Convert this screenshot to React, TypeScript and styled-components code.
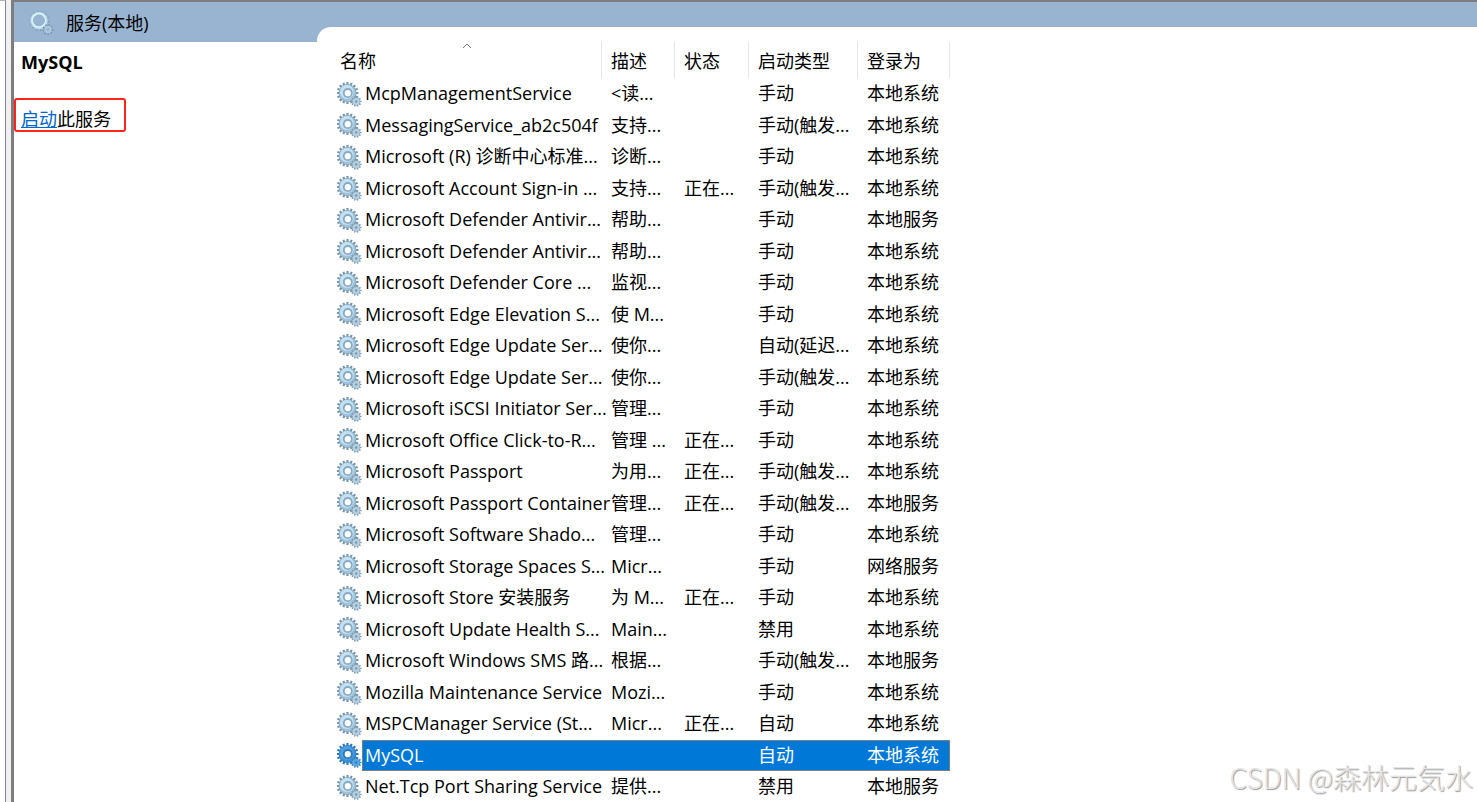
import React from "react";
import styled, { createGlobalStyle } from "styled-components";

const GlobalStyle = createGlobalStyle`
  * { box-sizing: border-box; }
  body {
    margin: 0;
    overflow: hidden;
    background: #fff;
    color: #000;
    font-family: "Open Sans", "Noto Sans CJK SC", sans-serif;
    font-size: 18px;
    line-height: 24px;
  }
`;

const Window = styled.div`
  display: flex;
  position: relative;
  height: 100vh;
  overflow: hidden;
`;

const TreeEdge = styled.div`
  flex: none;
  width: 6px;
  border-top: 1px solid #b4b4b4;
  border-right: 1px solid #828790;
`;

const Splitter = styled.div`
  flex: none;
  width: 5px;
  background: #f0f0f0;
`;

const Frame = styled.main`
  flex: 1;
  display: flex;
  min-width: 0;
  border-left: 3px solid #7d7d7d;
  border-top: 2px solid #7d7d7d;
`;

const DetailPane = styled.section`
  flex: none;
  width: 303px;
`;

const PaneTitle = styled.header`
  display: flex;
  align-items: center;
  gap: 12px;
  height: 40px;
  padding: 2px 0 0 15px;
  background: #99b4d1;
`;

const DetailBody = styled.div`
  display: flex;
  flex-direction: column;
  align-items: flex-start;
  gap: 24px;
  padding-top: 8px;
`;

const ServiceName = styled.h1`
  margin: 0;
  padding-left: 7px;
  font-size: 18px;
  line-height: 24px;
  font-weight: 700;
`;

const ActionBox = styled.p`
  margin: 0;
  padding: 8px 13px 0 5px;
  border: 2px solid #fe2419;
  border-radius: 3px;
  line-height: 22px;
`;

const ActionLink = styled.a`
  color: #0066cc;
  text-decoration: underline;
`;

const ListPane = styled.section`
  flex: 1;
  display: flex;
  min-width: 0;
  padding-top: 25px;
  background: #99b4d1;
`;

const ListSheet = styled.div`
  flex: 1;
  min-width: 0;
  padding: 15px 0 0 13px;
  border-top-left-radius: 14px;
  background: #fff;
`;

const Table = styled.table`
  width: 620px;
  table-layout: fixed;
  border-collapse: separate;
  border-spacing: 0;
  white-space: nowrap;
`;

const HeadCell = styled.th`
  position: relative;
  height: 36px;
  padding: 2px 0 0 9px;
  border-right: 1px solid #e5e5e5;
  font-weight: 400;
  text-align: left;
  &:first-child { padding-left: 10px; }
`;

const SortMark = styled.svg`
  position: absolute;
  top: 0;
  left: calc(50% - 4px);
`;

const Row = styled.tr<{ $selected: boolean }>`
  height: 32px;
  color: ${(p) => (p.$selected ? "#fff" : "#000")};
  &:nth-child(even) { height: 31px; }
  td:not(:first-child) {
    background: ${(p) => (p.$selected ? "#0078d7" : "transparent")};
    border: 0 solid ${(p) => (p.$selected ? "#7d7d7d" : "transparent")};
    border-width: ${(p) => (p.$selected ? "1px 0" : "0")};
  }
  td:nth-child(2) { border-left-width: 1px; }
  td:last-child { border-right-width: 1px; }
`;

const IconCell = styled.td`
  padding: 0 0 0 7px;
  line-height: 0;
`;

const NameCell = styled.td`
  padding: 0 0 2px 2px;
`;

const Cell = styled.td`
  padding: 0 0 2px 9px;
`;

const Watermark = styled.div`
  position: absolute;
  right: 4px;
  bottom: 5px;
  color: #e4e4e4;
  font-family: "Noto Sans CJK SC", sans-serif;
  font-size: 28px;
  font-weight: 300;
  line-height: 40px;
  text-shadow: 1px 1px 1px #999;
`;

const gear = (cx: number, cy: number, outer: number, inner: number, teeth: number) => {
  const step = (Math.PI * 2) / teeth;
  const pt = (r: number, a: number) =>
    `${(cx + r * Math.cos(a)).toFixed(2)} ${(cy + r * Math.sin(a)).toFixed(2)}`;
  let d = "";
  for (let i = 0; i < teeth; i++) {
    const a = i * step;
    d += `${i ? "L" : "M"}${pt(inner, a - step * 0.3)}L${pt(outer, a - step * 0.25)}L${pt(outer, a + step * 0.25)}L${pt(inner, a + step * 0.3)}`;
  }
  return d + "Z";
};

const BIG_GEAR = gear(10.5, 11, 11, 8.8, 16);
const SMALL_GEAR = gear(19.2, 19.5, 5.4, 3.8, 10);

const GearIcon = ({ selected }: { selected: boolean }) => (
  <svg width="25" height="25" viewBox="0 0 25 25" aria-hidden="true">
    <path d={BIG_GEAR} fill={selected ? "#2877ba" : "#7796ad"} />
    <circle cx="10.5" cy="11" r="8.4" fill={selected ? "#3d8ed2" : "#9fc3db"} />
    <circle cx="9.8" cy="10" r="6.9" fill={selected ? "#4c9ee0" : "#c4e1f1"} />
    <circle cx="10.8" cy="11" r="4.9" fill={selected ? "#2b78bd" : "#86a9c4"} />
    <circle cx="10.8" cy="11.2" r="3.1" fill="#fff" />
    <path d={SMALL_GEAR} fill={selected ? "#2f83c8" : "#7d9bb0"} />
    <circle cx="19.2" cy="19.5" r="3.5" fill={selected ? "#58a6e0" : "#b4d0e1"} />
    <circle cx="19.2" cy="19.5" r="1.3" fill={selected ? "#2f83c8" : "#7f9cb2"} />
  </svg>
);

const TitleIcon = () => (
  <svg width="25" height="25" viewBox="0 0 25 25" aria-hidden="true">
    <circle cx="10.5" cy="10" r="9.5" fill="none" stroke="#809fba" strokeWidth="1.4" strokeDasharray="2 2.2" />
    <circle cx="10" cy="9.5" r="7.2" fill="none" stroke="#b9dbeb" strokeWidth="3" />
    <circle cx="9.8" cy="9.2" r="6.8" fill="none" stroke="#def1f8" strokeWidth="1.4" />
    <circle cx="10" cy="9.5" r="5.2" fill="none" stroke="#8fb6d2" strokeWidth="1" />
    <circle cx="19" cy="18.5" r="4.8" fill="none" stroke="#7795b0" strokeWidth="1.4" strokeDasharray="1.6 1.6" />
    <circle cx="19" cy="18.5" r="2.6" fill="none" stroke="#adc9dc" strokeWidth="1.6" />
  </svg>
);

const SYS = "本地系统";
const LOCAL = "本地服务";
const RUN = "正在...";
const TRIG = "手动(触发...";

const services: string[][] = [
  ["McpManagementService", "<读...", "", "手动", SYS],
  ["MessagingService_ab2c504f", "支持...", "", TRIG, SYS],
  ["Microsoft (R) 诊断中心标准...", "诊断...", "", "手动", SYS],
  ["Microsoft Account Sign-in ...", "支持...", RUN, TRIG, SYS],
  ["Microsoft Defender Antivir...", "帮助...", "", "手动", LOCAL],
  ["Microsoft Defender Antivir...", "帮助...", "", "手动", SYS],
  ["Microsoft Defender Core ...", "监视...", "", "手动", SYS],
  ["Microsoft Edge Elevation S...", "使 M...", "", "手动", SYS],
  ["Microsoft Edge Update Ser...", "使你...", "", "自动(延迟...", SYS],
  ["Microsoft Edge Update Ser...", "使你...", "", TRIG, SYS],
  ["Microsoft iSCSI Initiator Ser...", "管理...", "", "手动", SYS],
  ["Microsoft Office Click-to-R...", "管理 ...", RUN, "手动", SYS],
  ["Microsoft Passport", "为用...", RUN, TRIG, SYS],
  ["Microsoft Passport Container", "管理...", RUN, TRIG, LOCAL],
  ["Microsoft Software Shado...", "管理...", "", "手动", SYS],
  ["Microsoft Storage Spaces S...", "Micr...", "", "手动", "网络服务"],
  ["Microsoft Store 安装服务", "为 M...", RUN, "手动", SYS],
  ["Microsoft Update Health S...", "Main...", "", "禁用", SYS],
  ["Microsoft Windows SMS 路...", "根据...", "", TRIG, LOCAL],
  ["Mozilla Maintenance Service", "Mozi...", "", "手动", SYS],
  ["MSPCManager Service (St...", "Micr...", RUN, "自动", SYS],
  ["MySQL", "", "", "自动", SYS],
  ["Net.Tcp Port Sharing Service", "提供...", "", "禁用", LOCAL],
];

export default function App() {
  return (
    <Window>
      <GlobalStyle />
      <TreeEdge />
      <Splitter />
      <Frame>
        <DetailPane>
          <PaneTitle>
            <TitleIcon />
            服务(本地)
          </PaneTitle>
          <DetailBody>
            <ServiceName>MySQL</ServiceName>
            <ActionBox>
              <ActionLink href="#start">启动</ActionLink>此服务
            </ActionBox>
          </DetailBody>
        </DetailPane>
        <ListPane>
          <ListSheet>
            <Table>
              <colgroup>
                <col width="32" />
                <col width="240" />
                <col width="73" />
                <col width="74" />
                <col width="109" />
                <col width="92" />
              </colgroup>
              <thead>
                <tr>
                  <HeadCell colSpan={2}>
                    名称
                    <SortMark width="10" height="8" viewBox="0 0 10 8" aria-hidden="true">
                      <path d="M1 6 5 2 9 6" fill="none" stroke="#777" />
                    </SortMark>
                  </HeadCell>
                  <HeadCell>描述</HeadCell>
                  <HeadCell>状态</HeadCell>
                  <HeadCell>启动类型</HeadCell>
                  <HeadCell>登录为</HeadCell>
                </tr>
              </thead>
              <tbody>
                {services.map(([name, desc, state, start, logon], i) => (
                  <Row key={i} $selected={name === "MySQL"}>
                    <IconCell>
                      <GearIcon selected={name === "MySQL"} />
                    </IconCell>
                    <NameCell>{name}</NameCell>
                    <Cell>{desc}</Cell>
                    <Cell>{state}</Cell>
                    <Cell>{start}</Cell>
                    <Cell>{logon}</Cell>
                  </Row>
                ))}
              </tbody>
            </Table>
          </ListSheet>
        </ListPane>
      </Frame>
      <Watermark>CSDN @森林元気水</Watermark>
    </Window>
  );
}
